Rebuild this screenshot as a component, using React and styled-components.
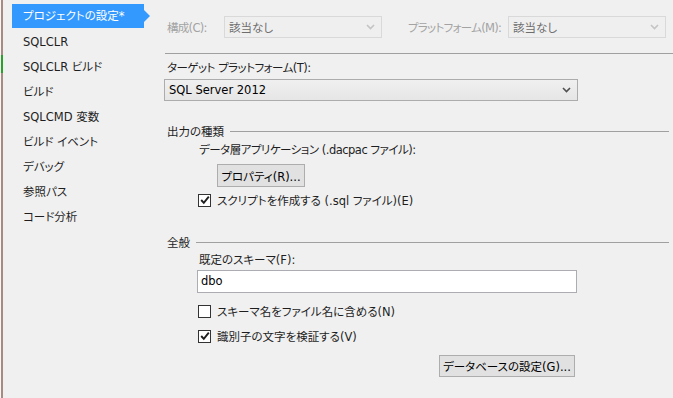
import React from 'react'
import styled, { createGlobalStyle } from 'styled-components'

const GlobalStyle = createGlobalStyle`
  html, body {
    margin: 0;
    padding: 0;
    background: #f0f0f0;
  }
  body {
    font-family: "DejaVu Sans", "Noto Sans CJK JP", sans-serif;
    font-size: 11.5px;
    color: #1e1e1e;
    font-feature-settings: "palt" 1;
  }
`

const Page = styled.div`
  display: flex;
  width: 673px;
  height: 398px;
  background: #f0f0f0;
  overflow: hidden;
`

const Edge = styled.div`
  width: 2px;
  border-left: 1px solid #f7f7f7;
  background: #a88a80;
  flex-shrink: 0;
`

const EdgeMarker = styled.div`
  margin-top: 55px;
  height: 18px;
  background: #2aa02a;
`

const Nav = styled.ul`
  list-style: none;
  margin: 0;
  padding: 4px 0 0 9px;
  width: 152px;
  flex-shrink: 0;
`

const NavItem = styled.li`
  position: relative;
  width: 132px;
  line-height: 24px;
  padding-left: 11px;
  box-sizing: border-box;
  white-space: nowrap;
  background: ${({ active }) => (active ? '#3399ff' : 'transparent')};
  color: ${({ active }) => (active ? '#ffffff' : '#1e1e1e')};
  height: ${({ active }) => (active ? '24px' : '25px')};
  margin-bottom: ${({ active }) => (active ? '2px' : '0')};

  ${({ active }) => active && `
    &::after {
      content: '';
      position: absolute;
      right: -6px;
      top: 6px;
      border-top: 6px solid transparent;
      border-bottom: 6px solid transparent;
      border-left: 6px solid #3399ff;
    }
  `}
`

const Main = styled.div`
  flex: 1;
  padding-top: 16px;
`

const TopRow = styled.div`
  display: flex;
  align-items: center;
  height: 22px;
`

const DimLabel = styled.span`
  width: ${({ w }) => w}px;
  padding-left: 3px;
  box-sizing: border-box;
  color: #a3a3a3;
  white-space: nowrap;
  letter-spacing: -0.7px;
  margin-left: ${({ gap }) => gap || 0}px;
`

const Combo = styled.div`
  display: flex;
  align-items: center;
  justify-content: space-between;
  width: ${({ w }) => w}px;
  height: 22px;
  box-sizing: border-box;
  padding: 0 6px 0 4px;
  border: 1px solid ${({ disabled }) => (disabled ? '#d9d9d9' : '#acacac')};
  background: ${({ disabled }) => (disabled ? '#efefef' : 'linear-gradient(#f0f0f0, #e6e6e6)')};
  color: ${({ disabled }) => (disabled ? '#6d6d6d' : '#000000')};
  white-space: nowrap;
  margin-top: ${({ mt }) => mt || 0}px;
`

const Separator = styled.div`
  margin-top: 15px;
  height: 1px;
  background: #a0a0a0;
  margin-left: 1px;
`

const Label = styled.div`
  height: 16px;
  line-height: 16px;
  margin-top: ${({ mt }) => mt || 0}px;
  padding-left: ${({ pl }) => pl || 0}px;
  letter-spacing: ${({ tight }) => (tight ? '-0.5px' : 'normal')};
  white-space: nowrap;
`

const SectionHeader = styled.div`
  display: flex;
  align-items: center;
  gap: 6px;
  height: 16px;
  margin-top: ${({ mt }) => mt}px;
  margin-right: 4px;
  padding-left: 3px;
  white-space: nowrap;

  &::after {
    content: '';
    flex: 1;
    height: 1px;
    background: #a0a0a0;
  }
`

const Indent = styled.div`
  margin-left: 33px;
  width: 380px;
  display: flex;
  flex-direction: column;
`

const Button = styled.div`
  display: flex;
  align-items: center;
  justify-content: center;
  height: ${({ h }) => h}px;
  width: ${({ w }) => w}px;
  box-sizing: border-box;
  border: 1px solid #adadad;
  background: #e1e1e1;
  color: #000;
  white-space: nowrap;
  margin-top: ${({ mt }) => mt || 0}px;
  margin-left: ${({ ml }) => ml || 0}px;
  align-self: ${({ right }) => (right ? 'flex-end' : 'flex-start')};
  margin-right: ${({ right }) => (right ? '2px' : '0')};
`

const CheckRow = styled.div`
  display: flex;
  align-items: center;
  gap: 6px;
  height: 16px;
  margin-top: ${({ mt }) => mt}px;
  padding-left: 1px;
  white-space: nowrap;
`

const Box = styled.span`
  display: inline-flex;
  align-items: center;
  justify-content: center;
  width: 13px;
  height: 13px;
  box-sizing: border-box;
  border: 1px solid #333333;
  background: #ffffff;
`

const TextInput = styled.div`
  margin-top: 2px;
  height: 23px;
  box-sizing: border-box;
  border: 1px solid #abadb3;
  background: #ffffff;
  color: #000;
  padding-left: 3px;
  line-height: 21px;
`

const Chevron = ({ color }) => (
  <svg width="9" height="6" viewBox="0 0 9 6">
    <path d="M1 1 L4.5 4.5 L8 1" fill="none" stroke={color} strokeWidth="1.6" />
  </svg>
)

const Check = ({ checked }) => (
  <Box>
    {checked && (
      <svg width="10" height="10" viewBox="0 0 10 10">
        <path d="M1.2 5 L3.8 7.8 L8.8 1.6" fill="none" stroke="#1e1e1e" strokeWidth="1.9" />
      </svg>
    )}
  </Box>
)

const navItems = [
  'プロジェクトの設定*',
  'SQLCLR',
  'SQLCLR ビルド',
  'ビルド',
  'SQLCMD 変数',
  'ビルド イベント',
  'デバッグ',
  '参照パス',
  'コード分析',
]

export default function App() {
  return (
    <Page>
      <GlobalStyle />
      <Edge>
        <EdgeMarker />
      </Edge>
      <Nav>
        {navItems.map((item, i) => (
          <NavItem key={i} active={i === 0}>{item}</NavItem>
        ))}
      </Nav>
      <Main>
        <TopRow>
          <DimLabel w={60}>構成(C):</DimLabel>
          <Combo disabled w={158}>
            <span>該当なし</span>
            <Chevron color="#c4c4c4" />
          </Combo>
          <DimLabel w={103} gap={23}>プラットフォーム(M):</DimLabel>
          <Combo disabled w={158}>
            <span>該当なし</span>
            <Chevron color="#c4c4c4" />
          </Combo>
        </TopRow>
        <Separator />
        <Label mt={6} pl={3} tight>ターゲット プラットフォーム(T):</Label>
        <Combo w={414} mt={3}>
          <span>SQL Server 2012</span>
          <Chevron color="#505050" />
        </Combo>

        <SectionHeader mt={22}>出力の種類</SectionHeader>
        <Indent>
          <Label mt={3} pl={2} tight>データ層アプリケーション (.dacpac ファイル):</Label>
          <Button w={88} h={23} mt={6} ml={20}>プロパティ(R)...</Button>
          <CheckRow mt={5}>
            <Check checked />
            スクリプトを作成する (.sql ファイル)(E)
          </CheckRow>
        </Indent>

        <SectionHeader mt={26}>全般</SectionHeader>
        <Indent>
          <Label mt={2} pl={2}>既定のスキーマ(F):</Label>
          <TextInput>dbo</TextInput>
          <CheckRow mt={10}>
            <Check />
            スキーマ名をファイル名に含める(N)
          </CheckRow>
          <CheckRow mt={9}>
            <Check checked />
            識別子の文字を検証する(V)
          </CheckRow>
          <Button w={136} h={22} mt={11} right>データベースの設定(G)...</Button>
        </Indent>
      </Main>
    </Page>
  )
}
